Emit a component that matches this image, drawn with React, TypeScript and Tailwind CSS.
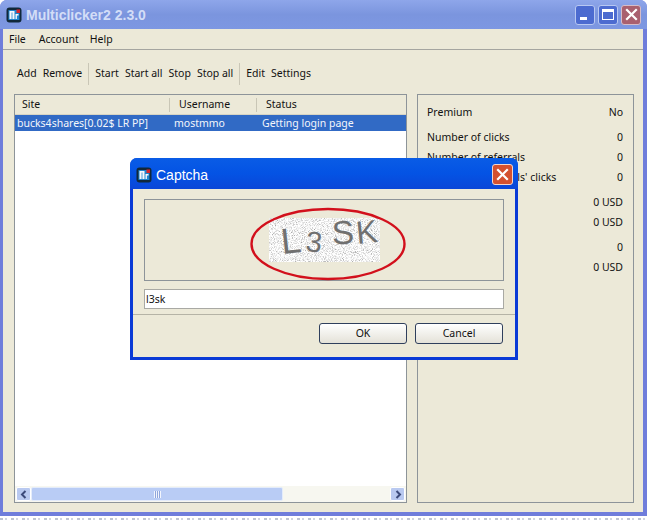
import React from "react";

const font = { fontFamily: '"Noto Sans", "Liberation Sans", sans-serif' };
const capFont = { fontFamily: '"Liberation Sans", sans-serif' };
const titleFont = { fontFamily: '"Liberation Sans", sans-serif' };

function AppIcon({ size = 16 }: { size?: number }) {
  return (
    <svg width={size} height={size} viewBox="0 0 16 16" className="shrink-0">
      <rect x="0.5" y="0.5" width="15" height="15" rx="3" fill="#10283a" />
      <rect x="2.5" y="3" width="11" height="10" fill="#1f86cf" />
      <path d="M3.5 12V4h5v8H7V5.5H6.6V12H5.4V5.5H5V12zM9.5 12V7h3v1.4h-1.6V12z" fill="#f5f8fc" />
      <rect x="10.5" y="2.5" width="3.5" height="3.5" fill="#d8262c" />
    </svg>
  );
}

function CloseGlyph() {
  return (
    <svg width="13" height="13" viewBox="0 0 13 13">
      <path d="M2 2l9 9M11 2l-9 9" stroke="#fff" strokeWidth="2.2" strokeLinecap="square" />
    </svg>
  );
}

function Row({ label, value, className = "" }: { label: string; value: string; className?: string }) {
  return (
    <div className={`flex justify-between items-center h-[20px] ${className}`}>
      <span>{label}</span>
      <span>{value}</span>
    </div>
  );
}

function Tool({ items }: { items: string[] }) {
  return (
    <div className="flex gap-[6px]">
      {items.map((t) => (
        <span key={t}>{t}</span>
      ))}
    </div>
  );
}

function Sep() {
  return <div className="w-px h-[22px] bg-[#c9c6b6] mx-[6px]" />;
}

export default function App() {
  return (
    <div style={font} className="relative w-[647px] h-[520px] overflow-hidden bg-white text-[10.5px] leading-none text-[#111]">
      <div className="w-[647px] h-[516px] bg-[#6f7ddb] rounded-t-[7px] pl-[3px] pr-[4px] pb-[4px] flex flex-col">
        <div className="h-[29px] -mx-[3px] -mr-[4px] shrink-0 rounded-t-[7px] bg-gradient-to-b from-[#8ea6ea] via-[#7b95de] to-[#7d97e2] flex items-center pl-[6px] pr-[6px]">
          <AppIcon />
          <span style={titleFont} className="ml-[4px] text-[14px] font-bold text-[#d3ddf7]">Multiclicker2 2.3.0</span>
          <div className="ml-auto flex gap-[3px]">
            <div className="w-[20px] h-[20px] rounded-[3px] border border-[#b8c8f2] bg-[#4c6bd0] flex items-end pl-[4px] pb-[4px]">
              <div className="w-[7px] h-[3px] bg-white" />
            </div>
            <div className="w-[20px] h-[20px] rounded-[3px] border border-[#b8c8f2] bg-[#4c6bd0] flex items-center justify-center">
              <div className="w-[12px] h-[11px] border border-white border-t-[3px]" />
            </div>
            <div className="w-[20px] h-[20px] rounded-[3px] border border-[#d5bcc8] bg-[#a9606f] flex items-center justify-center">
              <CloseGlyph />
            </div>
          </div>
        </div>
        <div className="flex-1 min-h-0 bg-[#ece9d8] flex flex-col">
          <div className="h-[21px] shrink-0 flex items-center gap-[11px] pl-[6px] border-b border-[#a5a5a0]">
            <span className="mr-[2px]">File</span>
            <span>Account</span>
            <span>Help</span>
          </div>
          <div className="h-[44px] shrink-0 flex items-center pl-[14px] pt-[3px]">
            <Tool items={["Add", "Remove"]} />
            <Sep />
            <Tool items={["Start", "Start all", "Stop", "Stop all"]} />
            <Sep />
            <Tool items={["Edit", "Settings"]} />
          </div>
          <div className="flex-1 min-h-0 flex gap-[10px] pl-[11px] pb-[9px] pr-[9px]">
            <div className="w-[393px] border border-[#8d9499] bg-white flex flex-col">
              <div className="h-[20px] shrink-0 bg-[#ece9d8] flex items-center border-b border-[#d8d5c4]">
                <div className="w-[155px] pl-[7px] border-r border-[#c9c6b6] h-[14px] flex items-center">Site</div>
                <div className="w-[87px] pl-[9px] border-r border-[#c9c6b6] h-[14px] flex items-center">Username</div>
                <div className="pl-[9px]">Status</div>
              </div>
              <div className="h-[16px] shrink-0 bg-[#316ac5] text-[#f4f6fb] flex items-center">
                <div className="w-[159px] pl-[2px] whitespace-nowrap">bucks4shares[0.02$ LR PP]</div>
                <div className="w-[88px]">mostmmo</div>
                <div>Getting login page</div>
              </div>
              <div className="flex-1" />
              <div className="h-[16px] shrink-0 flex bg-[#f7f7f0] p-px">
                <div className="w-[15px] bg-[#b9c9f0] border border-white rounded-[2px] flex items-center justify-center">
                  <svg width="8" height="9" viewBox="0 0 8 9"><path d="M5.5 1L2 4.5 5.5 8" fill="none" stroke="#3c4a7a" strokeWidth="2" /></svg>
                </div>
                <div className="w-[252px] bg-[#b9ccf5] border border-[#e4ecfb] rounded-[2px] flex items-center justify-center">
                  <div className="w-[7px] h-[7px] bg-[repeating-linear-gradient(90deg,#f2f5fd_0_1px,#8fa6dc_1px_2px)]" />
                </div>
                <div className="flex-1" />
                <div className="w-[15px] bg-[#b9c9f0] border border-white rounded-[2px] flex items-center justify-center">
                  <svg width="8" height="9" viewBox="0 0 8 9"><path d="M2.5 1L6 4.5 2.5 8" fill="none" stroke="#3c4a7a" strokeWidth="2" /></svg>
                </div>
              </div>
            </div>
            <div className="w-[217px] border border-[#8d9499] pl-[9px] pr-[10px] pt-[7px]">
              <Row label="Premium" value="No" className="mb-[5px]" />
              <Row label="Number of clicks" value="0" />
              <Row label="Number of referrals" value="0" />
              <Row label="Number of referrals' clicks" value="0" className="mb-[5px]" />
              <Row label="Balance" value="0 USD" />
              <Row label="Cashout" value="0 USD" className="mb-[5px]" />
              <Row label="Total" value="0" />
              <Row label="Earned" value="0 USD" />
            </div>
          </div>
        </div>
      </div>

      <div className="absolute left-0 right-0 bottom-0 h-[2px] bg-[repeating-linear-gradient(90deg,#5a6a90_0_3px,#ffffff_3px_5px,#8a96b4_5px_7px,#ffffff_7px_11px)] opacity-40" />

      <div className="absolute left-[130px] top-[158px] w-[388px] h-[202px] bg-[#0a3ad6] rounded-t-[7px] p-[3px] pt-0 flex flex-col">
        <div style={titleFont} className="h-[31px] -mx-[3px] shrink-0 rounded-t-[7px] bg-gradient-to-b from-[#0a5ce6] via-[#0453e4] to-[#0a46d8] flex items-center pl-[6px] pr-[5px] pt-[2px]">
          <AppIcon />
          <span className="ml-[4px] text-[14px] text-white font-medium">Captcha</span>
          <div className="ml-auto w-[21px] h-[21px] rounded-[3px] border border-[#f3d6cb] bg-[#d4512f] flex items-center justify-center">
            <CloseGlyph />
          </div>
        </div>
        <div className="flex-1 bg-[#ece9d8] flex flex-col">
          <div className="mx-[11px] mt-[10px] h-[82px] border border-[#8d9499] flex items-center justify-center relative">
            <div className="relative w-[111px] h-[44px] bg-[#d8d8d8] -mt-[1px]">
              <svg className="absolute inset-0" width="111" height="44">
                <filter id="n">
                  <feTurbulence type="fractalNoise" baseFrequency="1.1" numOctaves="2" seed="4" />
                  <feColorMatrix type="saturate" values="0" />
                  <feComponentTransfer>
                    <feFuncR type="linear" slope="2" intercept="-0.1" />
                    <feFuncG type="linear" slope="2" intercept="-0.1" />
                    <feFuncB type="linear" slope="2" intercept="-0.1" />
                    <feFuncA type="linear" slope="0" intercept="1" />
                  </feComponentTransfer>
                </filter>
                <rect width="111" height="44" filter="url(#n)" />
              </svg>
              <span className="absolute left-[12px] top-[5px] text-[36px] text-[#707070] -rotate-6" style={capFont}>L</span>
              <span className="absolute left-[37px] top-[10px] text-[29px] text-[#707070] rotate-6" style={capFont}>3</span>
              <span className="absolute left-[63px] top-[-2px] text-[33px] text-[#707070] -rotate-3" style={capFont}>S</span>
              <span className="absolute left-[87px] top-[-2px] text-[32px] text-[#707070] -rotate-6" style={capFont}>K</span>
            </div>
            <svg className="absolute left-[104px] top-[7px] pointer-events-none" width="158" height="74" viewBox="0 0 158 74">
              <ellipse cx="79" cy="37" rx="76.5" ry="35" fill="none" stroke="#d2101c" strokeWidth="2.4" />
            </svg>
          </div>
          <div className="mx-[11px] mt-[8px] h-[20px] border border-[#a9a9a4] bg-white flex items-center pl-[1px]">l3sk</div>
          <div className="mt-[5px] h-px bg-[#b5b3a6]" />
          <div className="flex justify-end gap-[8px] pr-[12px] pt-[8px]">
            <button className="w-[88px] h-[21px] rounded-[3px] border border-[#2f3f5c] bg-gradient-to-b from-white to-[#e4e2d8]">OK</button>
            <button className="w-[88px] h-[21px] rounded-[3px] border border-[#2f3f5c] bg-gradient-to-b from-white to-[#e4e2d8]">Cancel</button>
          </div>
        </div>
      </div>
    </div>
  );
}
